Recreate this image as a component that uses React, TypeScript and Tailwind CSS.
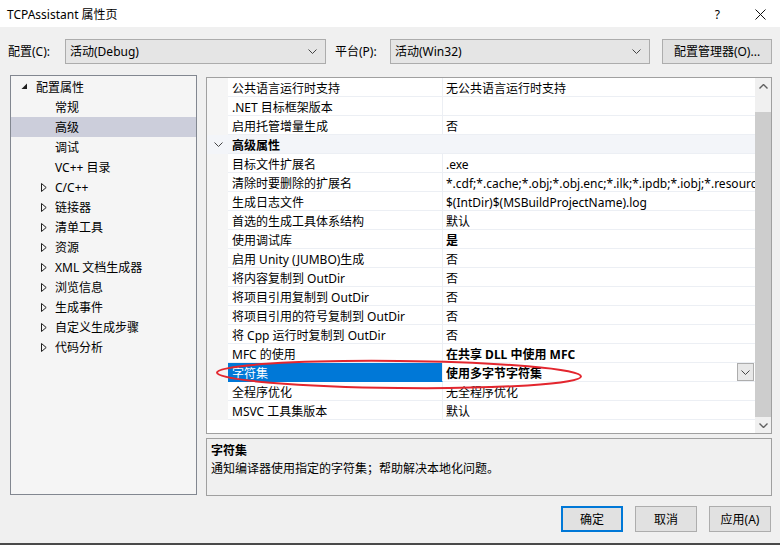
import React from "react";

const font = "font-['Noto_Sans','Noto_Sans_CJK_SC',sans-serif]";

function ChevronDown({ className = "" }: { className?: string }) {
  return (
    <svg width="9" height="5" viewBox="0 0 9 5" className={className}>
      <path d="M0.5 0.5 L4.5 4.5 L8.5 0.5" fill="none" stroke="#444" strokeWidth="1" />
    </svg>
  );
}

function ChevronUp() {
  return (
    <svg width="9" height="5" viewBox="0 0 9 5">
      <path d="M0.5 4.5 L4.5 0.5 L8.5 4.5" fill="none" stroke="#606060" strokeWidth="1.4" />
    </svg>
  );
}

function Combo({ text, w }: { text: string; w: string }) {
  return (
    <div className={`${w} h-[25px] border border-[#acacac] bg-[#e5e5e5] flex items-center pl-[4px] pr-[8px] justify-between pt-[1px]`}>
      <span className="text-[12px] text-black leading-[15px]">{text}</span>
      <ChevronDown />
    </div>
  );
}

function ExpandedTri() {
  return (
    <svg width="7" height="7" viewBox="0 0 7 7">
      <polygon points="6,0.5 6,6 0.5,6" fill="#1e1e1e" />
    </svg>
  );
}

function CollapsedTri() {
  return (
    <svg width="6" height="9" viewBox="0 0 6 9">
      <polygon points="0.5,0.5 5.2,4.5 0.5,8.5" fill="none" stroke="#1e1e1e" strokeWidth="1" />
    </svg>
  );
}

const treeChildren: { t: string; exp?: boolean; sel?: boolean }[] = [
  { t: "常规" },
  { t: "高级", sel: true },
  { t: "调试" },
  { t: "VC++ 目录" },
  { t: "C/C++", exp: true },
  { t: "链接器", exp: true },
  { t: "清单工具", exp: true },
  { t: "资源", exp: true },
  { t: "XML 文档生成器", exp: true },
  { t: "浏览信息", exp: true },
  { t: "生成事件", exp: true },
  { t: "自定义生成步骤", exp: true },
  { t: "代码分析", exp: true },
];

type Row = { n: string; v?: string; bold?: boolean; cat?: boolean; sel?: boolean };

const rows: Row[] = [
  { n: "公共语言运行时支持", v: "无公共语言运行时支持" },
  { n: ".NET 目标框架版本", v: "" },
  { n: "启用托管增量生成", v: "否" },
  { n: "高级属性", cat: true },
  { n: "目标文件扩展名", v: ".exe" },
  { n: "清除时要删除的扩展名", v: "*.cdf;*.cache;*.obj;*.obj.enc;*.ilk;*.ipdb;*.iobj;*.resources;*.tlb;*.tli;*.tlh;*.tmp;*.rsp" },
  { n: "生成日志文件", v: "$(IntDir)$(MSBuildProjectName).log" },
  { n: "首选的生成工具体系结构", v: "默认" },
  { n: "使用调试库", v: "是", bold: true },
  { n: "启用 Unity (JUMBO)生成", v: "否" },
  { n: "将内容复制到 OutDir", v: "否" },
  { n: "将项目引用复制到 OutDir", v: "否" },
  { n: "将项目引用的符号复制到 OutDir", v: "否" },
  { n: "将 Cpp 运行时复制到 OutDir", v: "否" },
  { n: "MFC 的使用", v: "在共享 DLL 中使用 MFC", bold: true },
  { n: "字符集", v: "使用多字节字符集", bold: true, sel: true },
  { n: "全程序优化", v: "无全程序优化" },
  { n: "MSVC 工具集版本", v: "默认" },
];

function GridRow({ r }: { r: Row }) {
  if (r.cat) {
    return (
      <div className="flex h-[19px] bg-[#f3f5f9]">
        <div className="w-[21px] flex items-center justify-center pl-[1px]">
          <ChevronDown />
        </div>
        <div className="flex-1 border-b border-[#eceff4] pl-[4px] pt-[3px] flex items-center">
          <span className="text-[12px] font-bold leading-[14px] text-black">{r.n}</span>
        </div>
      </div>
    );
  }
  return (
    <div className="flex h-[19px]">
      <div className="w-[21px] bg-[#f5f5f5]" />
      <div
        className={`w-[215px] border-r border-b pl-[4px] pt-[3px] flex items-center overflow-hidden ${
          r.sel ? "bg-[#0078d7] text-white border-b-[#0078d7] border-r-[#eceff4]" : "bg-white text-black border-[#eceff4]"
        }`}
      >
        <span className="text-[12px] leading-[14px] whitespace-nowrap">{r.n}</span>
      </div>
      <div className="flex-1 min-w-0 border-b border-[#eceff4] bg-white pl-[3px] flex items-center justify-between">
        <span
          className={`text-[12px] leading-[14px] pt-[3px] whitespace-nowrap overflow-hidden text-black ${r.bold ? "font-bold" : ""}`}
        >
          {r.v}
        </span>
        {r.sel && (
          <div className="w-[17px] h-[18px] mr-[1px] border border-[#adadad] bg-[#e8e8e8] flex items-center justify-center shrink-0">
            <ChevronDown />
          </div>
        )}
      </div>
    </div>
  );
}

function Btn({ text, def }: { text: string; def?: boolean }) {
  return (
    <div
      className={`w-[62px] h-[26px] flex items-center justify-center pt-[1px] ${
        def ? "border-2 border-[#0078d7] bg-[#e1e1e1]" : "border border-[#adadad] bg-[#e1e1e1]"
      }`}
    >
      <span className="text-[12px] text-black leading-[15px]">{text}</span>
    </div>
  );
}

export default function App() {
  return (
    <div className={`${font} relative w-[780px] h-[545px] bg-[#f0f0f0] overflow-hidden flex flex-col`}>
      {/* title bar */}
      <div className="h-[27px] bg-white flex items-center justify-between pl-[7px] pr-[14px] shrink-0 pt-[1px]">
        <span className="text-[12px] text-black leading-[15px]">TCPAssistant 属性页</span>
        <div className="flex items-center gap-[35px]">
          <span className="text-[12px] text-black leading-[15px]">?</span>
          <svg width="11" height="11" viewBox="0 0 11 11">
            <path d="M0.5 0.5 L10.5 10.5 M10.5 0.5 L0.5 10.5" stroke="#111" strokeWidth="1" />
          </svg>
        </div>
      </div>

      {/* config row */}
      <div className="flex items-center mt-[11px] h-[26px] pl-[8px]">
        <span className="text-[12px] w-[57px] leading-[15px] pt-[1px]">配置(C):</span>
        <Combo text="活动(Debug)" w="w-[261px]" />
        <span className="text-[12px] ml-[9px] w-[55px] leading-[15px] pt-[1px]">平台(P):</span>
        <Combo text="活动(Win32)" w="w-[260px]" />
        <div className="ml-[12px] w-[110px] h-[25px] border border-[#adadad] bg-[#e1e1e1] flex items-center justify-center pt-[1px]">
          <span className="text-[12px] leading-[15px]">配置管理器(O)...</span>
        </div>
      </div>

      {/* main */}
      <div className="flex mt-[11px] pl-[10px]">
        {/* tree */}
        <div className="w-[187px] h-[420px] border border-[#828790] bg-[#f5f5f5] pt-[1px] flex flex-col">
          <div className="h-[20px] flex items-center pl-[10px]">
            <div className="w-[15px] flex items-center pb-[1px]">
              <ExpandedTri />
            </div>
            <span className="text-[12px] leading-[14px] pt-[2px]">配置属性</span>
          </div>
          {treeChildren.map((c) => (
            <div
              key={c.t}
              className={`h-[20px] flex items-center pl-[30px] ${c.sel ? "bg-[#cccedb]" : ""}`}
            >
              <div className="w-[14px] flex items-center">{c.exp && <CollapsedTri />}</div>
              <span className="text-[12px] leading-[14px] pt-[2px] whitespace-nowrap">{c.t}</span>
            </div>
          ))}
        </div>

        {/* right column */}
        <div className="ml-[9px] w-[566px] flex flex-col pt-[2px]">
          <div className="h-[357px] border border-[#a0a0a0] bg-white flex">
            <div className="w-[548px] flex flex-col">
              {rows.map((r) => (
                <GridRow key={r.n} r={r} />
              ))}
            </div>
            <div className="w-[16px] bg-[#f0f0f0] flex flex-col">
              <div className="h-[17px] flex items-center justify-center">
                <ChevronUp />
              </div>
              <div className="h-[17px]" />
              <div className="h-[305px] bg-[#cdcdcd]" />
              <div className="flex-1 flex items-center justify-center">
                <svg width="9" height="5" viewBox="0 0 9 5">
                  <path d="M0.5 0.5 L4.5 4.5 L8.5 0.5" fill="none" stroke="#606060" strokeWidth="1.4" />
                </svg>
              </div>
            </div>
          </div>
          <div className="mt-[4px] h-[58px] border border-[#a0a0a0] bg-[#f0f0f0] pl-[4px] pt-[5px] flex flex-col gap-[4px]">
            <span className="text-[12px] font-bold leading-[14px]">字符集</span>
            <span className="text-[12px] leading-[14px]">通知编译器使用指定的字符集；帮助解决本地化问题。</span>
          </div>
        </div>
      </div>

      {/* buttons */}
      <div className="flex justify-end gap-[12px] pr-[9px] mt-[10px]">
        <Btn text="确定" def />
        <Btn text="取消" />
        <Btn text="应用(A)" />
      </div>

      <div className="absolute left-0 right-0 bottom-0 h-[2px] bg-[#4a4a4a]" />

      {/* red ellipse annotation */}
      <svg className="absolute left-[210px] top-[355px] pointer-events-none" width="380" height="40" viewBox="0 0 380 40">
        <ellipse cx="189" cy="19.5" rx="182" ry="13.5" fill="none" stroke="#e3262e" strokeWidth="2" transform="rotate(0.6 189 19.5)" />
      </svg>
    </div>
  );
}
